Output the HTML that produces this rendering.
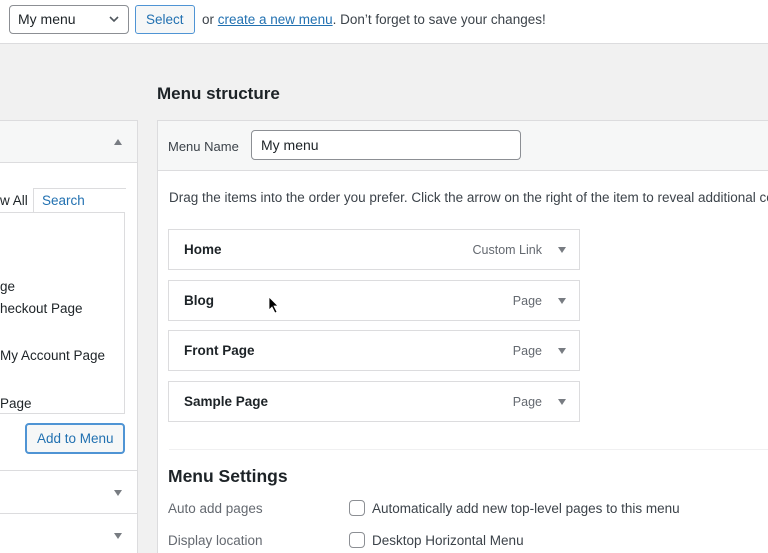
<!DOCTYPE html>
<html><head><meta charset="utf-8"><style>
*{box-sizing:border-box;margin:0;padding:0}
html,body{width:768px;height:553px;overflow:hidden}
body{background:#f1f1f1;font-family:"Liberation Sans",sans-serif;color:#1d2327;font-size:13.5px;position:relative}
.a{position:absolute;white-space:nowrap}
.tri{position:absolute;width:0;height:0;border-left:4px solid transparent;border-right:4px solid transparent}
.dn{border-top:6px solid #787c82}
.up{border-bottom:6px solid #787c82}
.item{position:absolute;left:168px;width:412px;height:41px;background:#fff;border:1px solid #dcdcde}
.item b{position:absolute;left:15px;top:12px;font-size:13.5px;font-weight:bold;color:#1d2327}
.item span{position:absolute;right:37px;top:13px;font-size:12.5px;color:#646970}
.item i{position:absolute;right:13px;top:17px}
.cb{position:absolute;width:16px;height:16px;border:1px solid #8c8f94;border-radius:4px;background:#fff}
</style></head><body>
<div class="a" style="left:0;top:0;width:768px;height:44px;background:#fff;border-bottom:1px solid #dcdcde"></div>
<div class="a" style="left:9px;top:5px;width:120px;height:29px;border:1px solid #8c8f94;border-radius:4px;background:#fff"></div>
<div class="a" style="left:18px;top:11px;font-size:14px">My menu</div>
<svg class="a" style="left:109px;top:15px" width="10" height="8"><path d="M1 2 L5 6 L9 2" stroke="#50575e" stroke-width="1.6" fill="none"/></svg>
<div class="a" style="left:135px;top:5px;width:60px;height:29px;border:1px solid #4f94d4;border-radius:3px;background:#f6f7f7"></div>
<div class="a" style="left:146px;top:12px;font-size:13.5px;color:#2271b1">Select</div>
<div class="a" style="left:202px;top:12px;font-size:13.5px;color:#3c434a">or <span style="color:#2271b1;text-decoration:underline">create a new menu</span>. Don’t forget to save your changes!</div>

<div class="a" style="left:157px;top:84px;font-size:17px;font-weight:bold;color:#1d2327">Menu structure</div>

<div class="a" style="left:0;top:120px;width:138px;height:440px;background:#fff;border:1px solid #dcdcde;border-left:none"></div>
<div class="a" style="left:0;top:121px;width:137px;height:42px;background:#f6f7f7;border-bottom:1px solid #dcdcde"></div>
<div class="tri up" style="left:114px;top:139px"></div>
<div class="a" style="left:33px;top:188px;width:1px;height:25px;background:#dcdcde"></div>
<div class="a" style="left:33px;top:188px;width:93px;height:1px;background:#dcdcde"></div>
<div class="a" style="left:0;top:212px;width:125px;height:202px;border:1px solid #dcdcde;border-left:none;background:#fff"></div>
<div class="a" style="left:0;top:193px;font-size:13.5px">w All</div>
<div class="a" style="left:42px;top:193px;font-size:13.5px;color:#2271b1">Search</div>
<div class="a" style="left:0;top:279px;font-size:13.5px">ge</div>
<div class="a" style="left:0;top:301px;font-size:13.5px">heckout Page</div>
<div class="a" style="left:0;top:348px;font-size:13.5px">My Account Page</div>
<div class="a" style="left:0;top:396px;font-size:13.5px">Page</div>
<div class="a" style="left:25px;top:423px;width:100px;height:31px;border:2px solid #4f94d4;border-radius:4px;background:#f6f7f7"></div>
<div class="a" style="left:37px;top:431px;font-size:13.5px;color:#2271b1">Add to Menu</div>
<div class="a" style="left:0;top:470px;width:137px;height:1px;background:#dcdcde"></div>
<div class="a" style="left:0;top:513px;width:137px;height:1px;background:#dcdcde"></div>
<div class="tri dn" style="left:114px;top:490px"></div>
<div class="tri dn" style="left:114px;top:533px"></div>

<div class="a" style="left:157px;top:120px;width:611px;height:433px;background:#fff;border:1px solid #dcdcde;border-right:none;border-bottom:none;overflow:hidden">
<div class="a" style="left:0;top:0;width:611px;height:50px;background:#f6f7f7;border-bottom:1px solid #dcdcde"></div>
<div class="a" style="left:11px;top:69px;width:599px;overflow:hidden;font-size:13.5px;color:#3c434a">Drag the items into the order you prefer. Click the arrow on the right of the item to reveal additional configuration options.</div>
<div class="a" style="left:11px;top:328px;width:600px;height:1px;background:#f0f0f1"></div>
</div>
<div class="a" style="left:168px;top:139px;font-size:13px;color:#3c434a">Menu Name</div>
<div class="a" style="left:251px;top:130px;width:270px;height:30px;border:1px solid #8c8f94;border-radius:4px;background:#fff"></div>
<div class="a" style="left:261px;top:137px;font-size:14px">My menu</div>

<div class="item" style="top:229px"><b>Home</b><span>Custom Link</span><i class="tri dn"></i></div>
<div class="item" style="top:280px"><b>Blog</b><span>Page</span><i class="tri dn"></i></div>
<div class="item" style="top:330px"><b>Front Page</b><span>Page</span><i class="tri dn"></i></div>
<div class="item" style="top:381px"><b>Sample Page</b><span>Page</span><i class="tri dn"></i></div>
<svg class="a" style="left:268px;top:296px" width="12" height="18"><path d="M1 1 L1 14 L4 11 L7 17 L9 16 L6 10 L10 10 Z" fill="#000" stroke="#fff" stroke-width="0.8"/></svg>

<div class="a" style="left:168px;top:466px;font-size:17.5px;font-weight:bold;color:#1d2327">Menu Settings</div>
<div class="a" style="left:168px;top:501px;font-size:13.5px;color:#646970">Auto add pages</div>
<div class="cb" style="left:349px;top:500px"></div>
<div class="a" style="left:372px;top:501px;font-size:13.5px;color:#3c434a">Automatically add new top-level pages to this menu</div>
<div class="a" style="left:168px;top:533px;font-size:13.5px;color:#646970">Display location</div>
<div class="cb" style="left:349px;top:532px"></div>
<div class="a" style="left:372px;top:533px;font-size:13.5px;color:#3c434a">Desktop Horizontal Menu</div>
</body></html>
